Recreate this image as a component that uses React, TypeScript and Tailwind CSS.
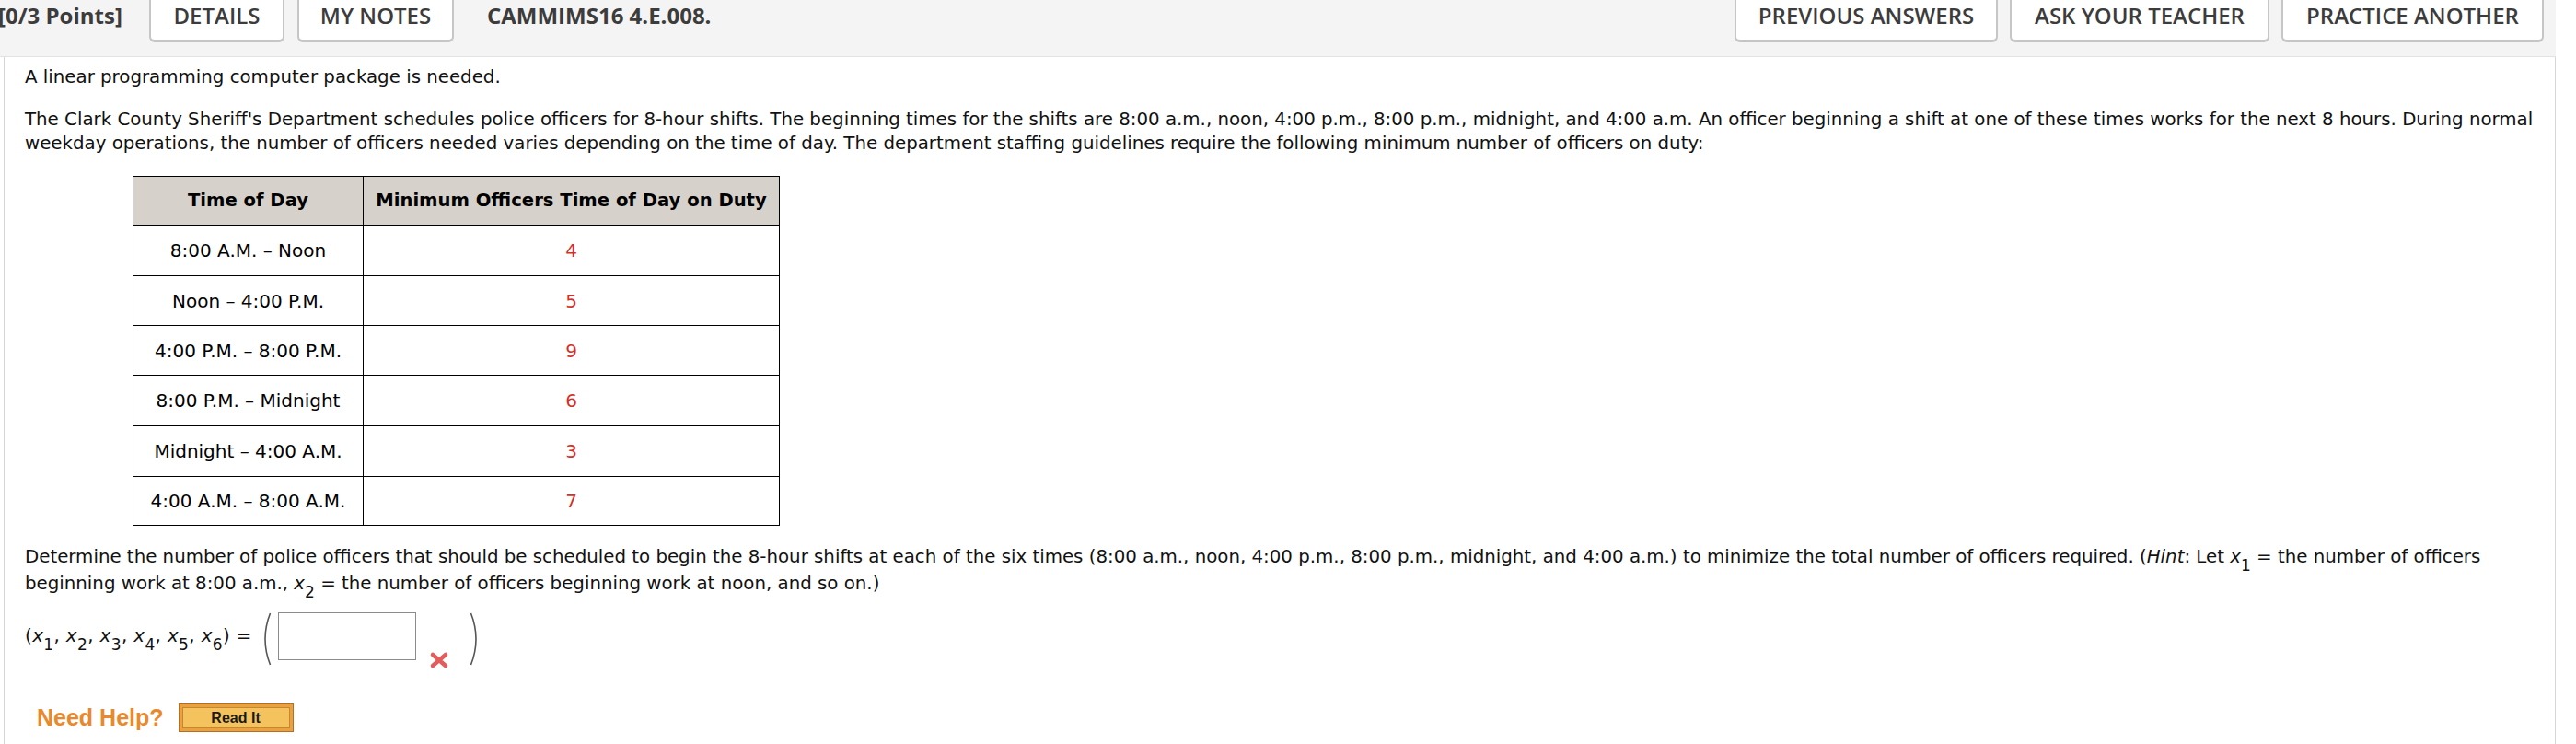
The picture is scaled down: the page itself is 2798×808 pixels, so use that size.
import React from "react";

const rows = [
  { t: "8:00 A.M. – Noon", n: "4", h: "h-[55px]" },
  { t: "Noon – 4:00 P.M.", n: "5", h: "h-[54px]" },
  { t: "4:00 P.M. – 8:00 P.M.", n: "9", h: "h-[54px]" },
  { t: "8:00 P.M. – Midnight", n: "6", h: "h-[55px]" },
  { t: "Midnight – 4:00 A.M.", n: "3", h: "h-[55px]" },
  { t: "4:00 A.M. – 8:00 A.M.", n: "7", h: "h-[53px]" },
];

function TabButton({ label, w }: { label: string; w: string }) {
  return (
    <div
      className={`${w} h-[46px] shrink-0 bg-white border-x-2 border-b-[3px] border-[#c6c6c6] rounded-b-[6px] flex justify-center text-[24px] leading-[33px] font-semibold text-[#3c3c3c]`}
    >
      {label}
    </div>
  );
}

function Sub({ c }: { c: string }) {
  return <sub className="text-[17px] bottom-[-9px]">{c}</sub>;
}

function X() {
  return <i className="font-['DejaVu_Sans',sans-serif]">x</i>;
}

export default function App() {
  return (
    <div className="w-[2798px] h-[808px] bg-white overflow-hidden">
      {/* header */}
      <div className="w-[2776px] h-[62px] bg-[#f4f4f4] border-b border-[#e2e2e2] flex items-start font-['Open_Sans',sans-serif] text-[#3c3c3c]">
        <div className="w-[164px] -ml-[2px] shrink-0 text-[24px] leading-[33px] font-bold whitespace-nowrap">
          [0/3 Points]
        </div>
        <TabButton label="DETAILS" w="w-[147px]" />
        <div className="w-[14px] shrink-0" />
        <TabButton label="MY NOTES" w="w-[170px]" />
        <div className="ml-[36px] text-[24px] leading-[33px] font-bold whitespace-nowrap">
          CAMMIMS16 4.E.008.
        </div>
        <div className="ml-auto mr-[13px] flex gap-[13px]">
          <TabButton label="PREVIOUS ANSWERS" w="w-[286px]" />
          <TabButton label="ASK YOUR TEACHER" w="w-[282px]" />
          <TabButton label="PRACTICE ANOTHER" w="w-[285px]" />
        </div>
      </div>

      {/* content */}
      <div className="ml-[4px] w-[2772px] h-[746px] border-x border-[#d6d6d6] pl-[22px] pr-[20px] pt-[9px] font-['DejaVu_Sans',Verdana,sans-serif] text-[19.8px] text-[#111]">
        <p className="leading-[26px] whitespace-nowrap">A linear programming computer package is needed.</p>
        <p className="mt-[20px] leading-[26px]">
          <span className="block whitespace-nowrap">
            The Clark County Sheriff's Department schedules police officers for 8-hour shifts. The beginning times for the shifts are 8:00 a.m., noon, 4:00 p.m., 8:00 p.m., midnight, and 4:00 a.m. An officer beginning a shift at one of these times works for the next 8 hours. During normal
          </span>
          <span className="block whitespace-nowrap">
            weekday operations, the number of officers needed varies depending on the time of day. The department staffing guidelines require the following minimum number of officers on duty:
          </span>
        </p>

        {/* table */}
        <div className="mt-[22px] ml-[117px] w-[703px] border-l border-t border-black text-black text-[20px]">
          <div className="flex h-[53px] bg-[#d6d2cb] font-bold text-[19.6px]">
            <div className="w-[250px] border-r border-b border-black flex items-center justify-center">
              Time of Day
            </div>
            <div className="flex-1 border-r border-b border-black flex items-center justify-center whitespace-nowrap">
              Minimum Officers Time of Day on Duty
            </div>
          </div>
          {rows.map((r) => (
            <div key={r.t} className={`flex ${r.h}`}>
              <div className="w-[250px] border-r border-b border-black flex items-center justify-center whitespace-nowrap">
                {r.t}
              </div>
              <div className="flex-1 border-r border-b border-black flex items-center justify-center text-[#d1312b]">
                {r.n}
              </div>
            </div>
          ))}
        </div>

        <p className="mt-[19px] leading-[29px]">
          <span className="block whitespace-nowrap">
            Determine the number of police officers that should be scheduled to begin the 8-hour shifts at each of the six times (8:00 a.m., noon, 4:00 p.m., 8:00 p.m., midnight, and 4:00 a.m.) to minimize the total number of officers required. (<i>Hint</i>: Let <X />
            <Sub c="1" /> = the number of officers
          </span>
          <span className="block whitespace-nowrap">
            beginning work at 8:00 a.m., <X />
            <Sub c="2" /> = the number of officers beginning work at noon, and so on.)
          </span>
        </p>

        {/* answer row */}
        <div className="mt-[17px] h-[58px] flex items-start">
          <div className="mt-[13px] w-[246px] shrink-0 leading-[26px] whitespace-nowrap tracking-[0.4px]">
            (<X />
            <Sub c="1" />, <X />
            <Sub c="2" />, <X />
            <Sub c="3" />, <X />
            <Sub c="4" />, <X />
            <Sub c="5" />, <X />
            <Sub c="6" />) =
          </div>
          <svg className="ml-[9px] shrink-0" width="13" height="58" viewBox="0 0 13 58">
            <path d="M11.5 1 Q0.5 29 11.5 57" fill="none" stroke="#555" strokeWidth="1.6" />
          </svg>
          <div className="ml-[7px] w-[150px] h-[52px] shrink-0 border border-[#8c8c8c] bg-white" />
          <svg className="ml-[14px] mt-[42px] shrink-0" width="22" height="20" viewBox="0 0 22 20">
            <path d="M4 4 L18 16 M18 4 L4 16" stroke="#e25d5d" strokeWidth="4.6" strokeLinecap="round" />
          </svg>
          <svg className="ml-[22px] shrink-0" width="13" height="58" viewBox="0 0 13 58">
            <path d="M1.5 1 Q12.5 29 1.5 57" fill="none" stroke="#555" strokeWidth="1.6" />
          </svg>
        </div>

        {/* need help */}
        <div className="mt-[41px] ml-[13px] h-[31px] flex items-start">
          <span className="font-['Liberation_Sans',Arial,sans-serif] font-bold text-[25px] leading-[31px] text-[#e9892e]">
            Need Help?
          </span>
          <div className="ml-[16px] w-[125px] h-[31px] border border-[#b66f22] bg-[#eaa241] p-[3px]">
            <div className="w-full h-full border border-[#c8862f] bg-[#f5c35e] flex items-center justify-center font-['Liberation_Sans',Arial,sans-serif] font-bold text-[16px] text-[#1a1a1a]">
              Read It
            </div>
          </div>
        </div>
      </div>
    </div>
  );
}
